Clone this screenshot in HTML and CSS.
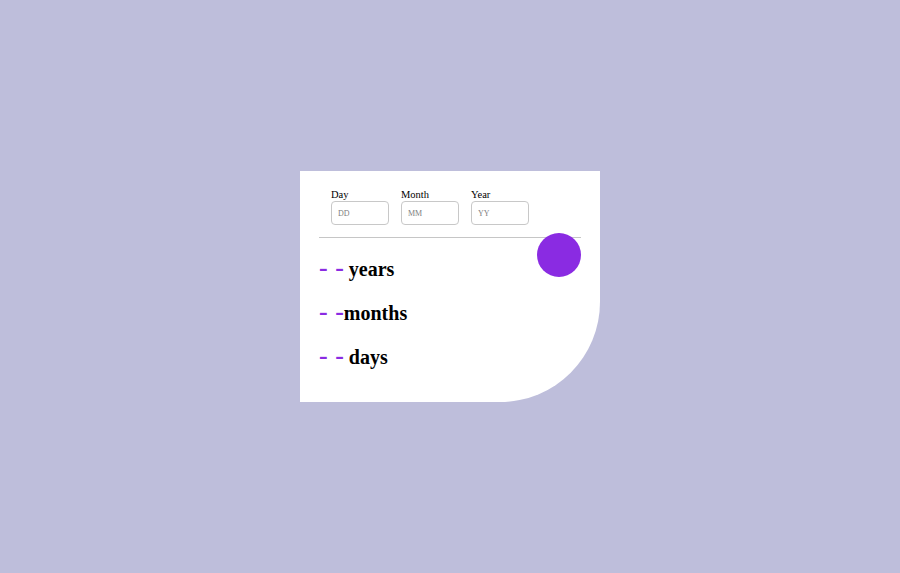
FILE: index.html
```html
<!DOCTYPE html>
<html>
<head>
<meta charset="utf-8">
<link rel="stylesheet" href="styles.css">
</head>
<body>
<main class="card">
  <form class="form">
    <div class="field">
      <label class="label" for="day">Day</label>
      <input class="input" id="day" type="text" placeholder="DD">
    </div>
    <div class="field">
      <label class="label" for="month">Month</label>
      <input class="input" id="month" type="text" placeholder="MM">
    </div>
    <div class="field">
      <label class="label" for="year">Year</label>
      <input class="input" id="year" type="text" placeholder="YY">
    </div>
  </form>
  <div class="divider-wrap">
    <hr class="divider">
    <button class="submit" type="button" aria-label="Calculate"></button>
  </div>
  <div class="results">
    <p class="result"><span class="dash">- -</span> years</p>
    <p class="result"><span class="dash">- -</span>months</p>
    <p class="result"><span class="dash">- -</span> days</p>
  </div>
</main>
</body>
</html>
```
FILE: styles.css
```css
html, body {
  margin: 0;
  padding: 0;
}
body {
  background: #bebedb;
  height: 100vh;
  display: flex;
  align-items: center;
  justify-content: center;
  font-family: "Liberation Serif", "Times New Roman", serif;
}
.card {
  width: 300px;
  height: 231px;
  box-sizing: border-box;
  background: #ffffff;
  border-radius: 0 0 100px 0;
  padding: 18px 19px 0 19px;
}
.form {
  display: flex;
  gap: 12px;
  margin: 0 0 0 12px;
}
.field {
  display: flex;
  flex-direction: column;
}
.label {
  font-size: 10.5px;
  line-height: 12px;
  color: #000;
}
.input {
  width: 58px;
  height: 24px;
  box-sizing: border-box;
  border: 1px solid #c8c8c8;
  border-radius: 4px;
  padding: 0 6px;
  margin: 0;
  font-family: "Liberation Serif", "Times New Roman", serif;
  font-size: 8px;
  color: #000;
  outline: none;
  background: #fff;
}
.input::placeholder {
  color: #808080;
  opacity: 1;
}
.divider-wrap {
  position: relative;
  margin-top: 12px;
}
.divider {
  margin: 0;
  border: 0;
  height: 1px;
  background: #c6c6c6;
}
.submit {
  position: absolute;
  right: 0;
  top: -4px;
  width: 44px;
  height: 44px;
  border: 0;
  padding: 0;
  border-radius: 50%;
  background: #8a2be2;
}
.results {
  margin-top: 8px;
}
.result {
  margin: 0;
  font-size: 20px;
  line-height: 44px;
  height: 44px;
  font-weight: bold;
  color: #000;
}
.dash {
  color: #8a2be2;
  font-size: 26px;
  word-spacing: 1px;
}
```
